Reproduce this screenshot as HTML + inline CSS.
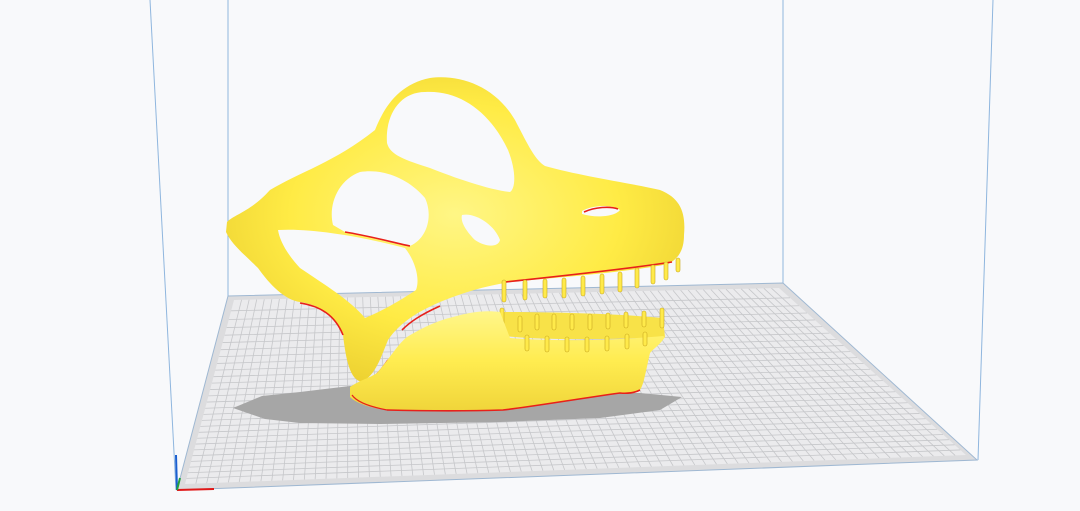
<!DOCTYPE html>
<html><head><meta charset="utf-8"><style>
html,body{margin:0;padding:0;background:#f8f9fb;}
svg{display:block}
</style></head><body>
<svg id="s" width="1080" height="511" viewBox="0 0 1080 511" xmlns="http://www.w3.org/2000/svg">
<defs>
<radialGradient id="yg" cx="0.5" cy="0.45" r="0.6">
<stop offset="0" stop-color="#fff685"/><stop offset="0.6" stop-color="#ffeb45"/><stop offset="1" stop-color="#ecd030"/>
</radialGradient>
<linearGradient id="jg" x1="0" y1="0" x2="0" y2="1">
<stop offset="0" stop-color="#fff68a"/><stop offset="0.5" stop-color="#ffec50"/><stop offset="1" stop-color="#f0d53a"/>
</linearGradient>
</defs>
<rect width="1080" height="511" fill="#f8f9fb"/>
<g stroke="#8fb6de" stroke-width="1" fill="none">
<line x1="150" y1="0" x2="176" y2="490"/>
<line x1="228" y1="0" x2="228" y2="296"/>
<line x1="783" y1="0" x2="783" y2="283"/>
<line x1="993" y1="0" x2="978" y2="460"/>
</g>
<polygon points="228,296 783,283 977,460 177,490" fill="#dcdcde" stroke="#9fb8d2" stroke-width="1"/>
<polygon points="234,300 779,288 966,455 185,484" fill="#ebebed"/>
<g id="grid" stroke="#c6c7ca" stroke-width="0.8"></g>
<polygon points="233,408 262,396 300,392 350,386 560,392 640,393 682,397 660,410 600,418 500,422 380,424 300,423 265,419" fill="#a6a6a6"/>
<path fill="url(#yg)" fill-rule="evenodd" d="M227,222 C235,214 250,212 270,190 C300,172 335,162 375,130 C385,105 400,84 430,78 C460,74 495,86 515,120 C528,145 535,160 545,166 C580,176 630,183 660,190 C680,198 686,212 684,235 C684,248 680,258 668,264 C640,270 580,276 520,281 C490,284 465,292 445,300 C420,310 400,322 388,340 C380,360 375,375 362,382 C350,380 346,360 343,335 C335,315 320,305 300,302 C285,300 270,285 258,268 C245,255 232,245 226,232 Z
M387,143 C385,115 400,92 425,92 C460,90 490,112 508,150 C516,170 516,188 510,192 C490,190 455,178 430,168 C405,160 390,155 387,143 Z
M333,225 C328,205 338,180 360,172 C385,168 410,180 425,198 C433,215 428,238 410,246 C395,245 370,236 345,232 Z
M462,215 C475,212 495,225 500,240 C498,248 485,247 475,240 C467,232 460,222 462,215 Z
M278,230 C310,228 360,236 405,248 C416,262 420,280 416,290 C398,302 380,312 365,318 C350,300 325,285 300,268 C288,255 280,242 278,230 Z
M582,211 C592,205 612,204 620,210 C615,217 595,218 582,214 Z"/>
<g stroke="#e8201a" stroke-width="1.6" fill="none">
<path d="M505,282 C560,276 620,270 672,262"/>
<path d="M345,232 C370,236 395,243 410,246"/>
<path d="M300,303 C320,306 335,315 343,335"/>
<path d="M365,383 C372,380 380,372 388,360"/>
<path d="M584,212 C595,207 610,206 618,209"/>
<path d="M440,306 C420,315 410,322 402,330"/>
</g>
<g fill="#ffea4a" stroke="#c9a820" stroke-width="0.6">
<rect x="502" y="280" width="4" height="22" rx="2"/>
<rect x="523" y="280" width="4" height="20" rx="2"/>
<rect x="543" y="279" width="4" height="19" rx="2"/>
<rect x="562" y="278" width="4" height="20" rx="2"/>
<rect x="581" y="276" width="4" height="20" rx="2"/>
<rect x="600" y="274" width="4" height="20" rx="2"/>
<rect x="618" y="272" width="4" height="20" rx="2"/>
<rect x="635" y="268" width="4" height="20" rx="2"/>
<rect x="651" y="265" width="4" height="19" rx="2"/>
<rect x="664" y="262" width="4" height="18" rx="2"/>
<rect x="676" y="258" width="4" height="14" rx="2"/>
</g>
<path fill="#f8e248" d="M500,312 C560,312 620,314 663,318 L665,337 C600,340 540,340 505,336 Z"/>
<g fill="#ffea4a" stroke="#c9a820" stroke-width="0.6">
<rect x="500" y="308" width="4" height="20" rx="2"/>
<rect x="518" y="316" width="4" height="16" rx="2"/>
<rect x="535" y="314" width="4" height="16" rx="2"/>
<rect x="552" y="314" width="4" height="16" rx="2"/>
<rect x="570" y="314" width="4" height="16" rx="2"/>
<rect x="588" y="314" width="4" height="16" rx="2"/>
<rect x="606" y="313" width="4" height="16" rx="2"/>
<rect x="624" y="312" width="4" height="16" rx="2"/>
<rect x="642" y="311" width="4" height="16" rx="2"/>
<rect x="660" y="308" width="4" height="20" rx="2"/>
</g>
<path fill="url(#jg)" d="M350,387 C360,380 370,378 377,373 C390,358 398,344 407,337 C425,326 440,320 453,317 C470,312 485,310 500,312 L510,338 C560,342 620,340 663,336 L665,337 C660,345 654,348 650,353 C646,370 644,384 640,390 C630,394 625,393 620,393 C590,398 570,400 553,403 C530,407 515,410 503,410 C460,411 420,411 387,410 C370,408 356,403 350,397 Z"/>
<g fill="#ffea4a" stroke="#c9a820" stroke-width="0.6">
<rect x="525" y="335" width="4" height="16" rx="2"/>
<rect x="545" y="336" width="4" height="16" rx="2"/>
<rect x="565" y="337" width="4" height="15" rx="2"/>
<rect x="585" y="337" width="4" height="15" rx="2"/>
<rect x="605" y="336" width="4" height="15" rx="2"/>
<rect x="625" y="334" width="4" height="15" rx="2"/>
<rect x="643" y="332" width="4" height="14" rx="2"/>
</g>
<path d="M387,410 C430,411 470,411 503,410 C530,407 570,400 620,393 C630,394 636,392 640,390" stroke="#e8201a" stroke-width="1.6" fill="none"/>
<path d="M352,395 C356,401 366,406 387,410" stroke="#e8201a" stroke-width="1.2" fill="none"/>
<line x1="177" y1="490" x2="214" y2="489" stroke="#e01818" stroke-width="2"/>
<line x1="177" y1="490" x2="176" y2="455" stroke="#1a5fd0" stroke-width="2"/>
<line x1="177" y1="490" x2="180" y2="478" stroke="#22a040" stroke-width="2"/>
</svg>
<script>
(function(){
var g=document.getElementById('grid');
var TL=[234,300],TR=[779,288],BR=[966,455],BL=[185,484];
function lerp(a,b,t){return [a[0]+(b[0]-a[0])*t,a[1]+(b[1]-a[1])*t];}
function add(p,q){var l=document.createElementNS('http://www.w3.org/2000/svg','line');
l.setAttribute('x1',p[0]);l.setAttribute('y1',p[1]);l.setAttribute('x2',q[0]);l.setAttribute('y2',q[1]);g.appendChild(l);}
var nx=72,ny=28;
for(var i=1;i<nx;i++){var t=i/nx;add(lerp(TL,TR,t),lerp(BL,BR,t));}
for(var j=1;j<ny;j++){var u=j/ny;u=Math.pow(u,0.85);add(lerp(TL,BL,u),lerp(TR,BR,u));}
})();
</script>
</body></html>
